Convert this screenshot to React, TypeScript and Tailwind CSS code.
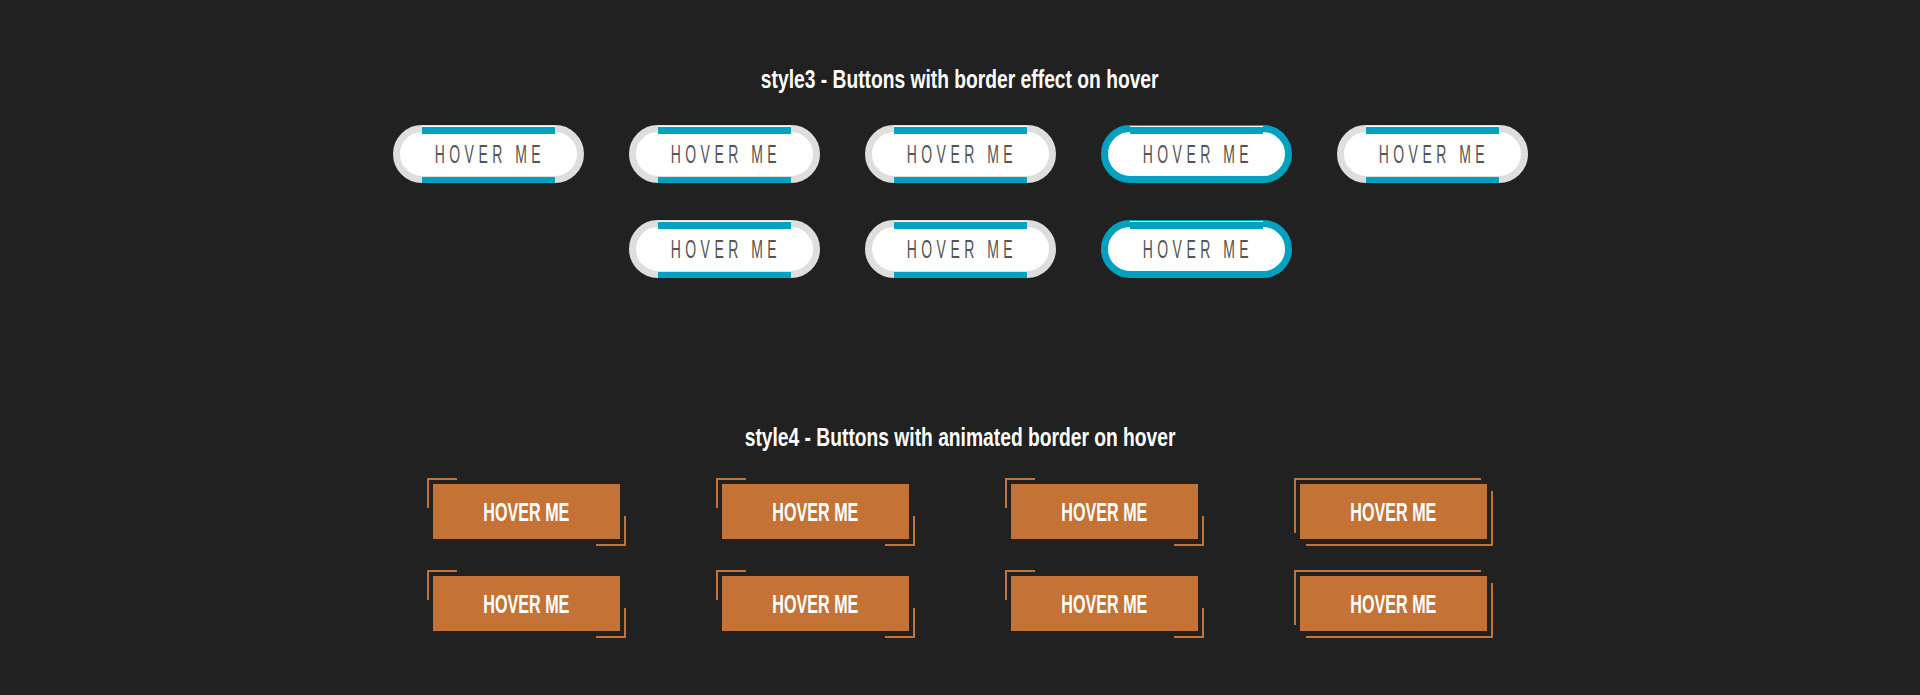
import React from 'react';

// Two demo sets of "HOVER ME" buttons, each frozen in a few steps of its hover animation.

const pillRows: boolean[][] = [
  [false, false, false, true, false],
  [false, false, true],
];

const bracketRows: boolean[][] = [
  [false, false, false, true],
  [false, false, false, true],
];

function PillButton({ active }: { active?: boolean }) {
  return (
    <button
      className={`relative flex h-[58px] w-[191px] items-center justify-center rounded-full border-[7px] bg-white ${
        active ? 'border-[#03a1c0]' : 'border-[#dedede]'
      }`}
    >
      {/* teal strips sliding along the border */}
      <span className="absolute -top-[6px] left-[22px] right-[22px] h-[8px] border-t border-white bg-[#03a1c0]" />
      <span className="absolute -bottom-[7px] left-[22px] right-[22px] h-[6px] bg-[#03a1c0]" />
      <span className="inline-block shrink-0 scale-x-[0.56] whitespace-nowrap pl-[8px] text-[25px] leading-none tracking-[8px] text-[#555]">
        HOVER ME
      </span>
    </button>
  );
}

function BracketButton({ full }: { full?: boolean }) {
  const size = full ? 'h-full w-full' : 'h-[30px] w-[30px]';
  return (
    <button className="relative flex h-[55px] w-[187px] items-center justify-center bg-[#c47236] text-white">
      <span className={`absolute -left-[6px] -top-[6px] border-l-2 border-t-2 border-[#c47236] ${size}`} />
      <span className={`absolute -bottom-[7px] -right-[6px] border-b-2 border-r-2 border-[#c47236] ${size}`} />
      <span className="inline-block scale-x-[0.62] whitespace-nowrap text-[26px] font-bold leading-none">HOVER ME</span>
    </button>
  );
}

function Heading({ children }: { children: React.ReactNode }) {
  return (
    <h2 className="text-center text-[26px] font-bold leading-[30px] text-white">
      <span className="inline-block scale-x-[0.74] whitespace-nowrap">{children}</span>
    </h2>
  );
}

export default function App() {
  return (
    <div className="min-h-screen bg-[#212121] pt-[64px] font-['Liberation_Sans_Narrow','Liberation_Sans',Arial,sans-serif]">
      {/* style3 */}
      <section>
        <Heading>style3 - Buttons with border effect on hover</Heading>
        <div className="mt-[31px] flex flex-col items-center gap-[37px]">
          {pillRows.map((row, i) => (
            <div key={i} className="flex justify-center gap-[45px]">
              {row.map((active, j) => (
                <PillButton key={j} active={active} />
              ))}
            </div>
          ))}
        </div>
      </section>

      {/* style4 */}
      <section className="mt-[144px]">
        <Heading>style4 - Buttons with animated border on hover</Heading>
        <div className="mt-[32px] flex flex-col items-center gap-[37px]">
          {bracketRows.map((row, i) => (
            <div key={i} className="flex justify-center gap-[102px]">
              {row.map((full, j) => (
                <BracketButton key={j} full={full} />
              ))}
            </div>
          ))}
        </div>
      </section>
    </div>
  );
}
